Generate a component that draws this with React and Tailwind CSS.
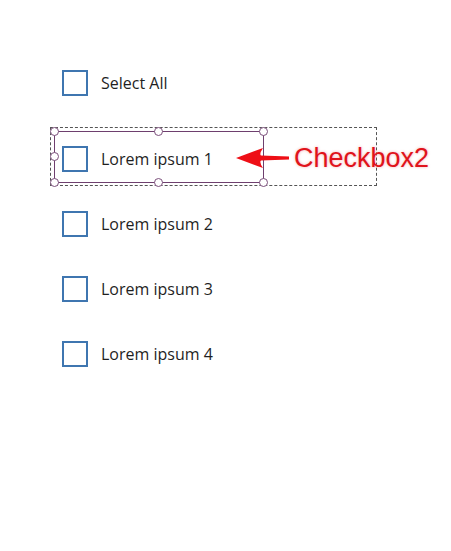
import React from 'react';

const items = ['Select All', 'Lorem ipsum 1', 'Lorem ipsum 2', 'Lorem ipsum 3', 'Lorem ipsum 4'];

function Handle({ className }) {
  return <span className={`absolute w-[9px] h-[9px] rounded-full bg-white border border-[#7b4f7b] ${className}`} />;
}

function Selection() {
  return (
    <>
      {/* dashed group bounds */}
      <div className="absolute left-[-12px] top-[-19px] w-[327px] h-[59px] border border-dashed border-[#555]" />
      {/* selected control */}
      <div className="absolute left-[-8px] top-[-15px] w-[210px] h-[52px] border border-[#6e3f6e]">
        <Handle className="left-[-5px] top-[-5px]" />
        <Handle className="left-[99px] top-[-5px]" />
        <Handle className="right-[-5px] top-[-5px]" />
        <Handle className="left-[-5px] top-[20px]" />
        <Handle className="left-[-5px] bottom-[-5px]" />
        <Handle className="left-[99px] bottom-[-5px]" />
        <Handle className="right-[-5px] bottom-[-5px]" />
      </div>
      {/* annotation */}
      <div className="absolute left-[174px] top-[-6px] flex items-center gap-[4px]">
        <svg width="54" height="22" viewBox="0 0 54 22">
          <path d="M0 11 L27 1 Q23 7 25 8.5 L53 9.5 L53 12.5 L25 13.5 Q23 15 27 21 Z" fill="#ee0f16" />
        </svg>
        <span
          className="whitespace-nowrap text-[27px] leading-[36px] text-[#e0131b] [text-shadow:0_0_3px_rgba(224,19,27,0.35)]"
          style={{ fontFamily: '"Liberation Sans", Arial, sans-serif' }}
        >
          Checkbox2
        </span>
      </div>
    </>
  );
}

export default function App() {
  return (
    <div className="w-[451px] h-[551px] bg-white pt-[70px] pl-[62px]" style={{ fontFamily: '"Open Sans", "Noto Sans", sans-serif' }}>
      <div className="flex flex-col">
        {items.map((label, i) => (
          <div key={label} className={`relative flex items-center gap-[13px] ${i === 1 ? 'mt-[50px]' : i > 1 ? 'mt-[39px]' : ''}`}>
            <span className="w-[26px] h-[26px] border-2 border-[#3f76b0] bg-white shrink-0" />
            <span className="text-[16px] text-[#1f1f1f]">{label}</span>
            {i === 1 && <Selection />}
          </div>
        ))}
      </div>
    </div>
  );
}
